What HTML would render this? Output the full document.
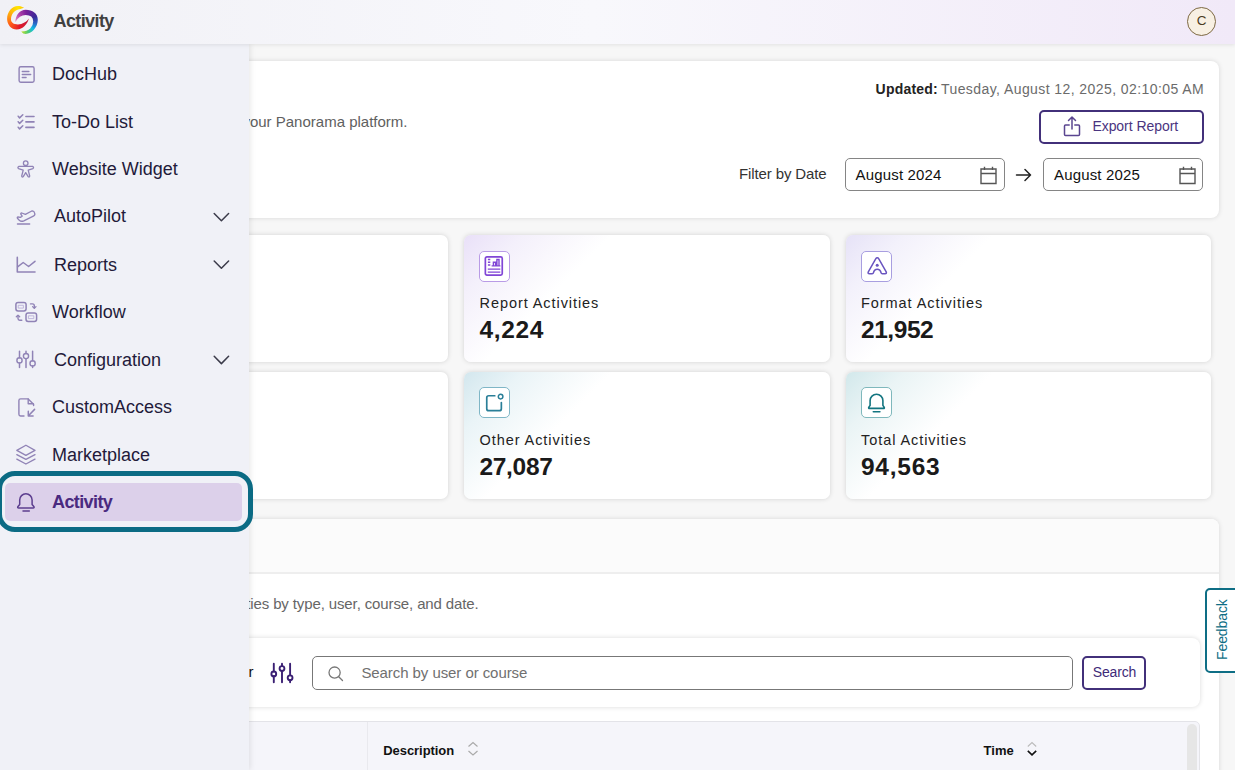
<!DOCTYPE html>
<html><head><meta charset="utf-8">
<style>
*{box-sizing:border-box;margin:0;padding:0}
html,body{width:1235px;height:770px;overflow:hidden}
body{font-family:"Liberation Sans",sans-serif;background:#f7f7f7;position:relative;color:#222}
.a{position:absolute;white-space:nowrap;line-height:1}
#hdr{left:0;top:0;width:1235px;height:44px;background:linear-gradient(90deg,#f1f1f6 0%,#f8f8fc 48%,#f1e9f8 100%);z-index:5;box-shadow:0 1px 4px rgba(0,0,0,0.09)}
#side{left:0;top:44px;width:249px;height:726px;background:#f0f1f7;z-index:4;box-shadow:1px 0 6px rgba(0,0,0,0.1)}
.nt{position:absolute;left:52px;font-size:18px;line-height:1;color:#231a3a;white-space:nowrap}
.card{position:absolute;background:#fff;border-radius:8px;box-shadow:0 0 5px rgba(0,0,0,0.13)}
.stat{position:absolute;border-radius:7px;box-shadow:0 0 5px rgba(0,0,0,0.15);height:127px;width:366px;overflow:hidden}
.ib{position:absolute;left:16px;width:31px;height:31px;border-radius:5px;background:#fff}
.lb{position:absolute;left:16px;font-size:14.5px;line-height:1;color:#222;letter-spacing:0.93px;white-space:nowrap;top:60.5px}
.nm{position:absolute;left:16px;font-size:24.5px;line-height:1;font-weight:bold;color:#1a1a1a;white-space:nowrap;top:82.6px}
</style></head><body>

<!-- main content -->
<div class="card" style="left:82px;top:61px;width:1137px;height:157px">
  <div class="a" style="left:793.6px;top:20.5px;font-size:14px;font-weight:bold;color:#222;letter-spacing:0.2px">Updated:</div>
  <div class="a" style="left:859px;top:20.5px;font-size:14px;color:#6b6b6b;letter-spacing:0.42px">Tuesday, August 12, 2025, 02:10:05 AM</div>
  <div class="a" style="right:811.5px;top:53.3px;font-size:15px;color:#606060">Track and monitor all activities across your Panorama platform.</div>
  <div class="a" style="left:657px;top:105.3px;font-size:15px;color:#333;letter-spacing:-0.12px">Filter by Date</div>
  <!-- export button -->
  <div class="a" style="left:957px;top:49px;width:164.5px;height:33.5px;border:2px solid #42307a;border-radius:5px"></div>
  <svg class="a" style="left:981px;top:54px" width="20" height="22" viewBox="0 0 20 22">
    <path d="M6.2,10 L2.5,10 Q1.5,10 1.5,11 L1.5,19.5 Q1.5,20.5 2.5,20.5 L15.5,20.5 Q16.5,20.5 16.5,19.5 L16.5,11 Q16.5,10 15.5,10 L11.8,10 M9,14 L9,2 M5.5,5.5 L9,2 L12.5,5.5" fill="none" stroke="#5a4590" stroke-width="1.5" stroke-linecap="round" stroke-linejoin="round"/>
  </svg>
  <div class="a" style="left:1010.4px;top:58.3px;font-size:14px;color:#4a3580;letter-spacing:-0.05px">Export Report</div>
  <!-- date inputs -->
  <div class="a" style="left:763px;top:97.3px;width:159.5px;height:33px;border:1.5px solid #858585;border-radius:5px"></div>
  <div class="a" style="left:773.6px;top:106.3px;font-size:15px;color:#111;letter-spacing:0.15px">August 2024</div>
  <svg class="a" style="left:897px;top:104px" width="20" height="20" viewBox="0 0 20 20">
    <path d="M2,4 L17,4 L17,18.5 L2,18.5 Z M2,8.5 L17,8.5 M5.5,1.8 L5.5,5 M13.5,1.8 L13.5,5" fill="none" stroke="#555" stroke-width="1.4"/>
  </svg>
  <svg class="a" style="left:933px;top:106px" width="18" height="16" viewBox="0 0 18 16">
    <path d="M1.5,8 L15.5,8 M10,2.5 L15.5,8 L10,13.5" fill="none" stroke="#222" stroke-width="1.5" stroke-linecap="round" stroke-linejoin="round"/>
  </svg>
  <div class="a" style="left:961.4px;top:97.3px;width:160px;height:33px;border:1.5px solid #858585;border-radius:5px"></div>
  <div class="a" style="left:972px;top:106.3px;font-size:15px;color:#111;letter-spacing:0.15px">August 2025</div>
  <svg class="a" style="left:1096px;top:104px" width="20" height="20" viewBox="0 0 20 20">
    <path d="M2,4 L17,4 L17,18.5 L2,18.5 Z M2,8.5 L17,8.5 M5.5,1.8 L5.5,5 M13.5,1.8 L13.5,5" fill="none" stroke="#555" stroke-width="1.4"/>
  </svg>
</div>

<!-- stat cards row 1 -->
<div class="stat" style="left:81.5px;top:235px;background:#fff"></div>
<div class="stat" style="left:463.5px;top:235px;background:linear-gradient(135deg,#e9e0f8 0%,#f4f0fb 12%,#ffffff 30%,#ffffff 100%)">
  <div class="ib" style="top:16px;left:15.5px;border:1px solid #b99be6">
    <svg class="a" style="left:4px;top:4px" width="22" height="22" viewBox="0 0 22 22">
      <rect x="1.35" y="0.85" width="16.9" height="18.3" rx="1.6" fill="none" stroke="#8146d6" stroke-width="1.7"/>
      <path d="M3.9,3.5 L6.3,3.5 M3.9,6.3 L6.3,6.3 M3.9,9 L6.3,9 M7.6,9.9 L16.4,9.9 M9.4,9.9 L9.4,6.2 L11.6,6.2 L11.6,9.9 M12.9,9.9 L12.9,3.5 L15,3.5 L15,9.9 M3.8,13.1 L16.3,13.1 M3.8,16.1 L16.3,16.1" fill="none" stroke="#8146d6" stroke-width="1.4"/>
    </svg>
  </div>
  <div class="lb">Report Activities</div>
  <div class="nm" style="letter-spacing:0.62px">4,224</div>
</div>
<div class="stat" style="left:846px;top:235px;width:365px;background:linear-gradient(135deg,#e6e2f7 0%,#f3f1fb 12%,#ffffff 30%,#ffffff 100%)">
  <div class="ib" style="top:16px;left:15px;border:1px solid #a89ee0">
    <svg class="a" style="left:4px;top:4px" width="22" height="22" viewBox="0 0 22 22">
      <path d="M11.25,1.8 Q12.2,1.8 12.8,2.8 L20.2,15.8 Q21,17.7 19,17.7 L16.3,17.7 Q15.3,17.7 15.1,16.8 Q14.2,13.2 11.25,13.2 Q8.3,13.2 7.4,16.8 Q7.2,17.7 6.2,17.7 L3.5,17.7 Q1.5,17.7 2.3,15.8 L9.7,2.8 Q10.3,1.8 11.25,1.8 Z" fill="none" stroke="#6a55c0" stroke-width="1.5" stroke-linejoin="round"/>
      <circle cx="11.2" cy="9.2" r="1.5" fill="#6a55c0"/>
    </svg>
  </div>
  <div class="lb" style="left:15px">Format Activities</div>
  <div class="nm" style="left:15px;letter-spacing:-0.44px">21,952</div>
</div>
<!-- row 2 -->
<div class="stat" style="left:81.5px;top:372px;background:#fff"></div>
<div class="stat" style="left:463.5px;top:372px;background:linear-gradient(135deg,#d3e7ee 0%,#eaf4f7 12%,#ffffff 30%,#ffffff 100%)">
  <div class="ib" style="top:15px;left:15.5px;border:1px solid #7fb6c6">
    <svg class="a" style="left:4px;top:4px" width="22" height="22" viewBox="0 0 22 22">
      <path d="M10.8,3.75 L4.75,3.75 Q2.75,3.75 2.75,5.75 L2.75,16.65 Q2.75,18.65 4.75,18.65 L15.35,18.65 Q17.35,18.65 17.35,16.65 L17.35,10.6" fill="none" stroke="#2a7f98" stroke-width="1.7" stroke-linecap="round"/>
      <circle cx="16.6" cy="4.6" r="2.3" fill="none" stroke="#2a7f98" stroke-width="1.5"/>
    </svg>
  </div>
  <div class="lb">Other Activities</div>
  <div class="nm" style="letter-spacing:-0.32px">27,087</div>
</div>
<div class="stat" style="left:846px;top:372px;width:365px;background:linear-gradient(135deg,#d2e8eb 0%,#eaf4f5 12%,#ffffff 30%,#ffffff 100%)">
  <div class="ib" style="top:15px;left:15px;border:1px solid #7fb8bc">
    <svg class="a" style="left:4px;top:4px" width="22" height="22" viewBox="0 0 22 22">
      <path d="M4.1,13.4 L4.1,8.6 A6.4,6.4 0 0 1 16.9,8.6 L16.9,13.4 L18.3,15.5 Q18.6,16.4 17.6,16.4 L3.4,16.4 Q2.4,16.4 2.7,15.5 Z" fill="none" stroke="#137580" stroke-width="1.6" stroke-linejoin="round"/>
      <path d="M7.3,19.8 L13.9,19.8" stroke="#137580" stroke-width="1.6" stroke-linecap="round"/>
    </svg>
  </div>
  <div class="lb" style="left:15px">Total Activities</div>
  <div class="nm" style="left:15px;letter-spacing:0.74px">94,563</div>
</div>

<!-- bottom section -->
<div class="card" style="left:82px;top:518.5px;width:1137px;height:300px;overflow:hidden">
  <div class="a" style="left:0;top:0;width:1137px;height:55px;background:#fbfbfb;border-bottom:2px solid #eeeeee"></div>
  <div class="a" style="right:740.4px;top:77.3px;font-size:15px;color:#666;letter-spacing:-0.12px">Filter and search activities by type, user, course, and date.</div>
  <!-- search card -->
  <div class="a" style="left:0;top:119.5px;width:1117.5px;height:68.5px;background:#fff;border-radius:8px;box-shadow:0 0 5px rgba(0,0,0,0.15)"></div>
  <div class="a" style="right:965.5px;top:145px;font-size:15px;color:#111">Advanced Filter</div>
  <svg class="a" style="left:186px;top:141px" width="26" height="26" viewBox="0 0 26 26">
    <g fill="none" stroke="#3a1f73" stroke-width="1.9" stroke-linecap="round">
      <path d="M5.8,3.8 L5.8,11.5 M5.8,16.3 L5.8,22.2 M14,3.8 L14,6.1 M14,10.9 L14,22.2 M22.1,3.8 L22.1,15.4 M22.1,20.2 L22.1,22.2"/>
      <circle cx="5.8" cy="13.9" r="2.4"/>
      <circle cx="14" cy="8.5" r="2.4"/>
      <circle cx="22.1" cy="17.8" r="2.4"/>
    </g>
  </svg>
  <div class="a" style="left:230px;top:137.5px;width:760.5px;height:33.5px;border:1.3px solid #777;border-radius:5px"></div>
  <svg class="a" style="left:245px;top:146px" width="18" height="18" viewBox="0 0 18 18">
    <circle cx="7.6" cy="7.6" r="5.6" fill="none" stroke="#777" stroke-width="1.3"/>
    <path d="M11.7,11.7 L15.5,15.5" stroke="#777" stroke-width="1.3" stroke-linecap="round"/>
  </svg>
  <div class="a" style="left:279.4px;top:146.6px;font-size:15px;color:#707070;letter-spacing:-0.07px">Search by user or course</div>
  <div class="a" style="left:1000.3px;top:137.5px;width:63.5px;height:33.5px;border:2px solid #42307a;border-radius:5px"></div>
  <div class="a" style="left:1010.8px;top:146.4px;font-size:14px;color:#3e2a78;letter-spacing:-0.15px">Search</div>
  <!-- table -->
  <div class="a" style="left:0;top:202.2px;width:1117.5px;height:120px;background:#f5f5fa;border:1px solid #e3e3e8;border-radius:5px"></div>
  <div class="a" style="left:285.4px;top:203.2px;width:1px;height:100px;background:#e9e9ee"></div>
  <div class="a" style="left:301.2px;top:225.4px;font-size:13px;font-weight:bold;color:#111;letter-spacing:-0.05px">Description</div>
  <svg class="a" style="left:385px;top:222px" width="12" height="16" viewBox="0 0 12 16">
    <path d="M1.5,5.5 L6,1.5 L10.5,5.5 M1.5,10 L6,14 L10.5,10" fill="none" stroke="#aaa" stroke-width="1.2"/>
  </svg>
  <div class="a" style="left:901.4px;top:225.4px;font-size:13px;font-weight:bold;color:#111;letter-spacing:0.1px">Time</div>
  <svg class="a" style="left:943.5px;top:222px" width="12" height="16" viewBox="0 0 12 16">
    <path d="M1.8,5.5 L6,1.5 L10.2,5.5" fill="none" stroke="#bbb" stroke-width="1.1"/>
    <path d="M1.8,9.8 L6,13.8 L10.2,9.8" fill="none" stroke="#111" stroke-width="1.6"/>
  </svg>
  <div class="a" style="left:1105.2px;top:205.4px;width:10px;height:100px;background:#e6e6e6;border-radius:5px"></div>
</div>

<!-- feedback tab -->
<div class="a" style="left:1205px;top:587.5px;width:40px;height:85px;background:#fff;border:2px solid #0e6e85;border-radius:5px;z-index:3"></div>
<div class="a" style="left:1191.5px;top:622.5px;width:60px;height:14px;font-size:14px;color:#0e6e85;transform:rotate(-90deg);transform-origin:center;z-index:3;text-align:center;letter-spacing:-0.1px">Feedback</div>

<!-- header -->
<div id="hdr" class="a">
  <div class="a" style="left:0;top:0;width:45px;height:45px;clip-path:path('M24.1,7.8 C21.5,6.3 19.5,6 18,6 C12,6 7.1,11.8 7.1,18.9 C7.1,24.7 11.4,29.4 16.6,29.4 C23,29.4 27.5,24 28.9,18.5 C27,21.5 22.5,24.4 18,24.4 C13.5,24.4 11,22.5 11,19.5 C11,14 14.5,9.5 20.3,8.9 Q22.5,8.3 24.1,7.8 Z');background:conic-gradient(from 0deg at 18px 18px,#ffe600 0deg,#ffd000 20deg,#c0183a 90deg,#e0182a 170deg,#ff5a1a 230deg,#ff9a10 280deg,#ffe600 360deg)"></div>
  <div class="a" style="left:0;top:0;width:45px;height:45px;clip-path:path('M15.3,22.1 C15.5,15 20,9.8 25.7,9.8 C32.5,9.8 37.8,13.5 37.8,19.8 C37.8,27.5 31.5,33.9 25.7,33.9 Q23,33.9 21.2,31.4 Q27,31.5 30.3,28.5 Q33.3,25.5 33.2,21.2 Q33,15 25.7,15 Q19.5,15 15.3,22.1 Z');background:conic-gradient(from 0deg at 26px 22px,#7a1f9a 0deg,#3a2a98 60deg,#2a6ac8 100deg,#10bce6 135deg,#50cc70 170deg,#d0e020 210deg,#e080c0 280deg,#b040a8 320deg,#7a1f9a 360deg)"></div>
  <div class="a" style="left:53.5px;top:11.56px;font-size:18px;font-weight:bold;color:#404040;letter-spacing:-0.6px">Activity</div>
  <div class="a" style="left:1187px;top:6.7px;width:29px;height:29px;border-radius:50%;background:#f8f0e3;border:1.8px solid #7d6843;color:#4a3a20;font-size:13.5px;text-align:center;line-height:26px">C</div>
</div>

<!-- sidebar -->
<div id="side" class="a">
  <svg class="a" style="left:0;top:-44px" width="249" height="560" viewBox="0 0 249 560">
    <g fill="none" stroke="#9083b6" stroke-width="1.4" stroke-linecap="round" stroke-linejoin="round">
      <!-- DocHub -->
      <rect x="19.1" y="66.8" width="15" height="15.4" rx="1.6"/>
      <path d="M22.3,71.5 L28.9,71.5 M22.3,74.5 L30.7,74.5 M22.3,77.5 L26.1,77.5"/>
      <!-- To-Do -->
      <path d="M18.2,116.2 L19.6,117.9 L22.8,114.7 M18.2,121.7 L19.6,123.4 L22.8,120.2 M18.2,127.2 L19.6,128.9 L22.8,125.7" stroke-width="1.5"/>
      <path d="M25.9,116.5 L34,116.5 M25.9,121.9 L34,121.9 M25.9,127.4 L34,127.4" stroke-width="1.6"/>
      <!-- Website widget -->
      <circle cx="25.7" cy="163.2" r="2.3" stroke-width="1.3"/>
      <path d="M19,166.4 L32.6,166.4 Q34.3,167.3 32.9,168.6 L28.2,170.2 L29.7,176 Q29.5,177.6 28.3,176.8 L25.7,172.6 L23.1,176.8 Q21.9,177.6 21.7,176 L23.2,170.2 L18.5,168.6 Q17.1,167.3 19,166.4 Z" stroke-width="1.3"/>
      <!-- AutoPilot -->
      <path d="M34.6,213 Q35.4,215 33.8,215.8 L23.8,220.8 Q21.2,222 19.3,220.2 L17.4,218.2 Q16.9,217.2 18.1,217 L20.3,217.4 L22.2,216.2 L20.8,214.1 Q20.5,212.9 21.8,213 L25.4,214.4 L31.3,211.2 Q33.8,210.3 34.6,213 Z" stroke-width="1.3"/>
      <path d="M17.5,224.1 L29.6,224.1" stroke-width="1.5"/>
      <!-- Reports -->
      <path d="M17.3,257.4 L17.3,272 L35,272" stroke-width="1.6"/>
      <path d="M17.6,266.8 L23.2,262.5 L28.6,266.5 L35,261.3" stroke-width="1.5"/>
      <!-- Workflow -->
      <rect x="15.9" y="302.4" width="10.2" height="8.6" rx="2.2" stroke-width="1.5"/>
      <rect x="18.6" y="305.3" width="4.8" height="2.8" stroke-width="0.8" stroke="#b5aad6"/>
      <rect x="26" y="313.1" width="10.6" height="8.3" rx="2.2" stroke-width="1.5"/>
      <rect x="28.8" y="315.8" width="5" height="2.8" stroke-width="0.8" stroke="#b5aad6"/>
      <path d="M30.5,303.9 L32.5,303.9 Q34.3,303.9 34.3,305.7 L34.3,307.8" stroke-width="1.4"/>
      <path d="M32.6,306.6 L34.3,308.4 L36,306.6" stroke-width="1.3"/>
      <path d="M18,316 L18,318.6 Q18,320.3 19.7,320.3 L21.8,320.3" stroke-width="1.4"/>
      <path d="M16.3,316.8 L18,315.1 L19.7,316.8" stroke-width="1.3"/>
      <!-- Configuration -->
      <path d="M19.5,351.3 L19.5,357.8 M19.5,363 L19.5,367.5 M26,351.3 L26,353.5 M26,358.7 L26,367.5 M32.6,351.3 L32.6,360.8 M32.6,366 L32.6,367.5" stroke-width="1.5"/>
      <circle cx="19.5" cy="360.4" r="2.6" stroke-width="1.4"/>
      <circle cx="26" cy="356.1" r="2.6" stroke-width="1.4"/>
      <circle cx="32.6" cy="363.4" r="2.6" stroke-width="1.4"/>
      <!-- CustomAccess -->
      <path d="M24,416 L20.6,416 Q18.9,416 18.9,414.3 L18.9,400.6 Q18.9,398.9 20.6,398.9 L28.2,398.9 L33.6,404.2 L33.6,405.6" stroke-width="1.4"/>
      <path d="M28.2,398.9 L28.2,403.8 L33.2,403.8" stroke-width="1.4"/>
      <path d="M34.6,409.4 L28.4,415.7 M28.3,411.2 L28.3,415.9 L33.1,415.9" stroke-width="1.5"/>
      <!-- Marketplace -->
      <path d="M25.9,445.2 L35,450.4 L25.9,455.4 L16.8,450.4 Z" stroke-width="1.3"/>
      <path d="M16.8,454.6 L25.9,459.4 L35,454.6 M16.8,459.1 L25.9,464 L35,459.1" stroke-width="1.3"/>
    </g>
    <g fill="none" stroke="#3b3b4a" stroke-width="1.5" stroke-linecap="round" stroke-linejoin="round">
      <path d="M214.2,213.5 L221.4,220.8 L228.6,213.5"/>
      <path d="M214.2,261 L221.4,268.3 L228.6,261"/>
      <path d="M214.2,356.3 L221.4,363.6 L228.6,356.3"/>
    </g>
  </svg>
  <div class="nt" style="top:20.96px">DocHub</div>
  <div class="nt" style="top:68.56px">To-Do List</div>
  <div class="nt" style="top:115.66px">Website Widget</div>
  <div class="nt" style="top:163.46px;left:54px">AutoPilot</div>
  <div class="nt" style="top:211.66px;left:54px">Reports</div>
  <div class="nt" style="top:258.76px">Workflow</div>
  <div class="nt" style="top:306.76px;left:54px">Configuration</div>
  <div class="nt" style="top:353.56px">CustomAccess</div>
  <div class="nt" style="top:401.56px">Marketplace</div>
  <!-- active -->
  <div class="a" style="left:-3px;top:427px;width:256px;height:61px;border:5.8px solid #0b6b84;border-radius:18px;z-index:2"></div>
  <div class="a" style="left:5.3px;top:439px;width:237.2px;height:38px;background:#dcd0ea;border-radius:5px"></div>
  <svg class="a" style="left:0;top:0" width="60" height="500" viewBox="0 44 60 500">
    <path d="M19.7,504.5 L19.7,500 A6.2,6.2 0 0 1 32.1,500 L32.1,504.5 L34,506.8 Q34.5,508 33.2,508 L18.6,508 Q17.3,508 17.8,506.8 Z" fill="none" stroke="#5c3e8f" stroke-width="1.5" stroke-linejoin="round"/>
    <path d="M23,511.1 L29.3,511.1" stroke="#5c3e8f" stroke-width="1.5" stroke-linecap="round"/>
  </svg>
  <div class="nt" style="top:448.66px;font-weight:bold;color:#4a2a80;letter-spacing:-0.6px">Activity</div>
</div>

</body></html>
